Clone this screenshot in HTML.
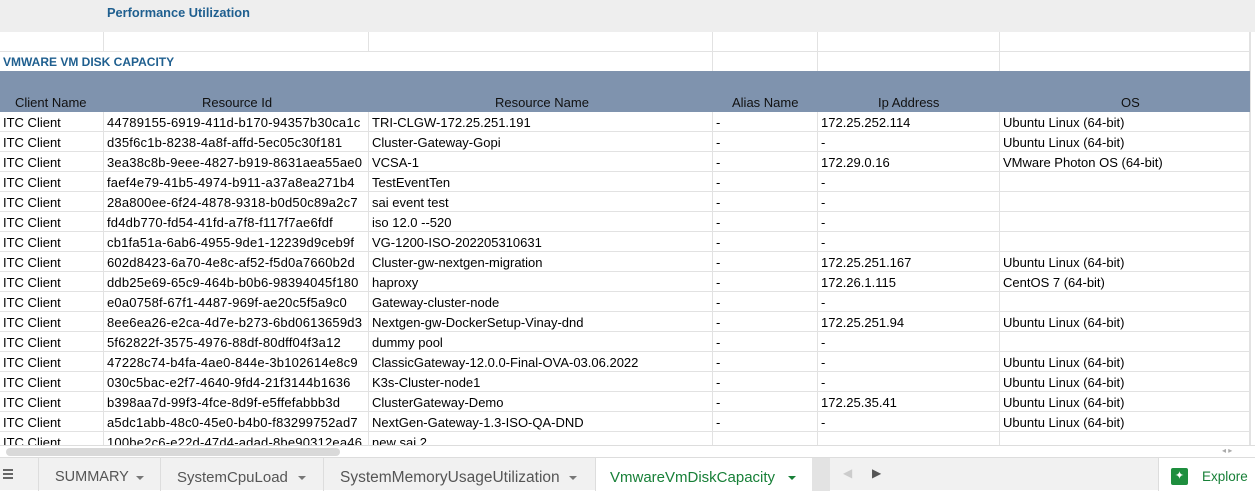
<!DOCTYPE html>
<html><head><style>
*{margin:0;padding:0;box-sizing:border-box}
body{width:1255px;height:490px;overflow:hidden;background:#fff;font-family:"Liberation Sans",Arial,sans-serif;font-size:13px;color:#000;position:relative}
.top{position:absolute;left:0;top:0;width:1255px;height:32px;background:#eeeeee}
.top span{position:absolute;left:107px;top:5px;color:#1f5f8f;font-weight:bold;font-size:12.8px}
.grid{position:absolute;left:0;top:32px;width:1250px}
.r{position:relative;height:20px;border-bottom:1px solid #e2e2e2;white-space:nowrap}
.r div{position:absolute;top:0;height:20px;line-height:21px;padding-left:3px;border-right:1px solid #e2e2e2;overflow:hidden}
.c0{left:0;width:104px}.c1{left:104px;width:265px;letter-spacing:0.2px}.c2{left:369px;width:344px}.c3{left:713px;width:105px}.c4{left:818px;width:182px}.c5{left:1000px;width:250px}
.hd{position:absolute;left:0;top:71px;width:1250px;height:41px;background:#7f93ae}
.hd span{position:absolute;top:24px;font-size:13px;color:#111}
.title{position:absolute;left:3px;top:55px;color:#1f5f8f;font-weight:bold;font-size:12px}
.data{position:absolute;left:0;top:112px;width:1250px;height:333px;overflow:hidden}
.vs{position:absolute;left:1250px;top:32px;width:5px;height:413px;background:#fff;border-left:1px solid #e2e2e2}
.hs{position:absolute;left:0;top:445px;width:1255px;height:12px;background:#fff;border-top:1px solid #ddd}
.hs .bar{position:absolute;left:6px;top:2px;width:334px;height:8px;border-radius:4px;background:#d9d9d9}
.tabs{position:absolute;left:0;top:457px;width:1255px;height:33px;background:#f1f1f1;border-top:1px solid #ddd;color:#555;font-size:14px}
.tab{position:absolute;top:0;height:33px;border-left:1px solid #ddd}
.t{position:absolute;top:11px;white-space:nowrap;font-size:15px}
.caret{position:absolute;top:18px;width:0;height:0;border-left:4px solid transparent;border-right:4px solid transparent;border-top:4px solid #777}
</style></head><body>
<div class="top"><span>Performance Utilization</span></div>
<div class="grid">
<div class="r"><div class="c0"></div><div class="c1"></div><div class="c2"></div><div class="c3"></div><div class="c4"></div><div class="c5"></div></div>
<div class="r"><div class="c0" style="border-right:none"></div><div class="c1" style="border-right:none"></div><div class="c2"></div><div class="c3"></div><div class="c4"></div><div class="c5"></div></div>
</div>
<div class="title">VMWARE VM DISK CAPACITY</div>
<div class="hd">
<span style="left:15px">Client Name</span><span style="left:202px">Resource Id</span><span style="left:495px">Resource Name</span><span style="left:732px">Alias Name</span><span style="left:878px">Ip Address</span><span style="left:1121px">OS</span>
</div>
<div class="data">
<div class="r"><div class="c0">ITC Client</div><div class="c1">44789155-6919-411d-b170-94357b30ca1c</div><div class="c2">TRI-CLGW-172.25.251.191</div><div class="c3">-</div><div class="c4">172.25.252.114</div><div class="c5">Ubuntu Linux (64-bit)</div></div>
<div class="r"><div class="c0">ITC Client</div><div class="c1">d35f6c1b-8238-4a8f-affd-5ec05c30f181</div><div class="c2">Cluster-Gateway-Gopi</div><div class="c3">-</div><div class="c4">-</div><div class="c5">Ubuntu Linux (64-bit)</div></div>
<div class="r"><div class="c0">ITC Client</div><div class="c1">3ea38c8b-9eee-4827-b919-8631aea55ae0</div><div class="c2">VCSA-1</div><div class="c3">-</div><div class="c4">172.29.0.16</div><div class="c5">VMware Photon OS (64-bit)</div></div>
<div class="r"><div class="c0">ITC Client</div><div class="c1">faef4e79-41b5-4974-b911-a37a8ea271b4</div><div class="c2">TestEventTen</div><div class="c3">-</div><div class="c4">-</div><div class="c5"></div></div>
<div class="r"><div class="c0">ITC Client</div><div class="c1">28a800ee-6f24-4878-9318-b0d50c89a2c7</div><div class="c2">sai event test</div><div class="c3">-</div><div class="c4">-</div><div class="c5"></div></div>
<div class="r"><div class="c0">ITC Client</div><div class="c1">fd4db770-fd54-41fd-a7f8-f117f7ae6fdf</div><div class="c2">iso 12.0 --520</div><div class="c3">-</div><div class="c4">-</div><div class="c5"></div></div>
<div class="r"><div class="c0">ITC Client</div><div class="c1">cb1fa51a-6ab6-4955-9de1-12239d9ceb9f</div><div class="c2">VG-1200-ISO-202205310631</div><div class="c3">-</div><div class="c4">-</div><div class="c5"></div></div>
<div class="r"><div class="c0">ITC Client</div><div class="c1">602d8423-6a70-4e8c-af52-f5d0a7660b2d</div><div class="c2">Cluster-gw-nextgen-migration</div><div class="c3">-</div><div class="c4">172.25.251.167</div><div class="c5">Ubuntu Linux (64-bit)</div></div>
<div class="r"><div class="c0">ITC Client</div><div class="c1">ddb25e69-65c9-464b-b0b6-98394045f180</div><div class="c2">haproxy</div><div class="c3">-</div><div class="c4">172.26.1.115</div><div class="c5">CentOS 7 (64-bit)</div></div>
<div class="r"><div class="c0">ITC Client</div><div class="c1">e0a0758f-67f1-4487-969f-ae20c5f5a9c0</div><div class="c2">Gateway-cluster-node</div><div class="c3">-</div><div class="c4">-</div><div class="c5"></div></div>
<div class="r"><div class="c0">ITC Client</div><div class="c1">8ee6ea26-e2ca-4d7e-b273-6bd0613659d3</div><div class="c2">Nextgen-gw-DockerSetup-Vinay-dnd</div><div class="c3">-</div><div class="c4">172.25.251.94</div><div class="c5">Ubuntu Linux (64-bit)</div></div>
<div class="r"><div class="c0">ITC Client</div><div class="c1">5f62822f-3575-4976-88df-80dff04f3a12</div><div class="c2">dummy pool</div><div class="c3">-</div><div class="c4">-</div><div class="c5"></div></div>
<div class="r"><div class="c0">ITC Client</div><div class="c1">47228c74-b4fa-4ae0-844e-3b102614e8c9</div><div class="c2">ClassicGateway-12.0.0-Final-OVA-03.06.2022</div><div class="c3">-</div><div class="c4">-</div><div class="c5">Ubuntu Linux (64-bit)</div></div>
<div class="r"><div class="c0">ITC Client</div><div class="c1">030c5bac-e2f7-4640-9fd4-21f3144b1636</div><div class="c2">K3s-Cluster-node1</div><div class="c3">-</div><div class="c4">-</div><div class="c5">Ubuntu Linux (64-bit)</div></div>
<div class="r"><div class="c0">ITC Client</div><div class="c1">b398aa7d-99f3-4fce-8d9f-e5ffefabbb3d</div><div class="c2">ClusterGateway-Demo</div><div class="c3">-</div><div class="c4">172.25.35.41</div><div class="c5">Ubuntu Linux (64-bit)</div></div>
<div class="r"><div class="c0">ITC Client</div><div class="c1">a5dc1abb-48c0-45e0-b4b0-f83299752ad7</div><div class="c2">NextGen-Gateway-1.3-ISO-QA-DND</div><div class="c3">-</div><div class="c4">-</div><div class="c5">Ubuntu Linux (64-bit)</div></div>
<div class="r"><div class="c0">ITC Client</div><div class="c1">100be2c6-e22d-47d4-adad-8be90312ea46</div><div class="c2">new sai 2</div><div class="c3"></div><div class="c4"></div><div class="c5"></div></div>
</div>
<div class="vs"></div>
<div class="hs"><div class="bar"></div><span style="position:absolute;left:1222px;top:0;font-size:8px;color:#aaa">◂ ▸</span></div>
<div class="tabs">
<div style="position:absolute;left:3px;top:11px;width:10px;height:10px;border-top:2px solid #666;border-bottom:2px solid #666"><div style="margin-top:2px;height:2px;background:#666"></div></div>
<div class="tab" style="left:38px;width:122px"></div>
<div class="tab" style="left:160px;width:163px"></div>
<div class="tab" style="left:323px;width:272px"></div>
<div class="tab" style="left:595px;width:217px;background:#fff"></div>
<span class="t" style="left:55px;font-size:14.5px">SUMMARY</span><span class="caret" style="left:136px"></span>
<span class="t" style="left:177px">SystemCpuLoad</span><span class="caret" style="left:298px"></span>
<span class="t" style="left:340px;font-size:15.5px">SystemMemoryUsageUtilization</span><span class="caret" style="left:569px"></span>
<span class="t" style="left:610px;color:#188038">VmwareVmDiskCapacity</span><span class="caret" style="left:788px;border-top-color:#188038"></span>
<div style="position:absolute;left:812px;top:0;width:18px;height:33px;background:#e3e3e3"></div>
<span style="position:absolute;left:843px;top:8px;color:#ccc;font-size:12px">◀</span>
<span style="position:absolute;left:872px;top:8px;color:#555;font-size:12px">▶</span>
<div class="tab" style="left:1158px;width:97px;background:#fff"></div>
<span class="t" style="left:1202px;color:#188038;font-size:13.5px">Explore</span>
<div style="position:absolute;left:1171px;top:10px;width:17px;height:17px;background:#1e8e3e;border-radius:2px;color:#fff;font-size:11px;line-height:17px;text-align:center">✦</div>
</div>
</body></html>
